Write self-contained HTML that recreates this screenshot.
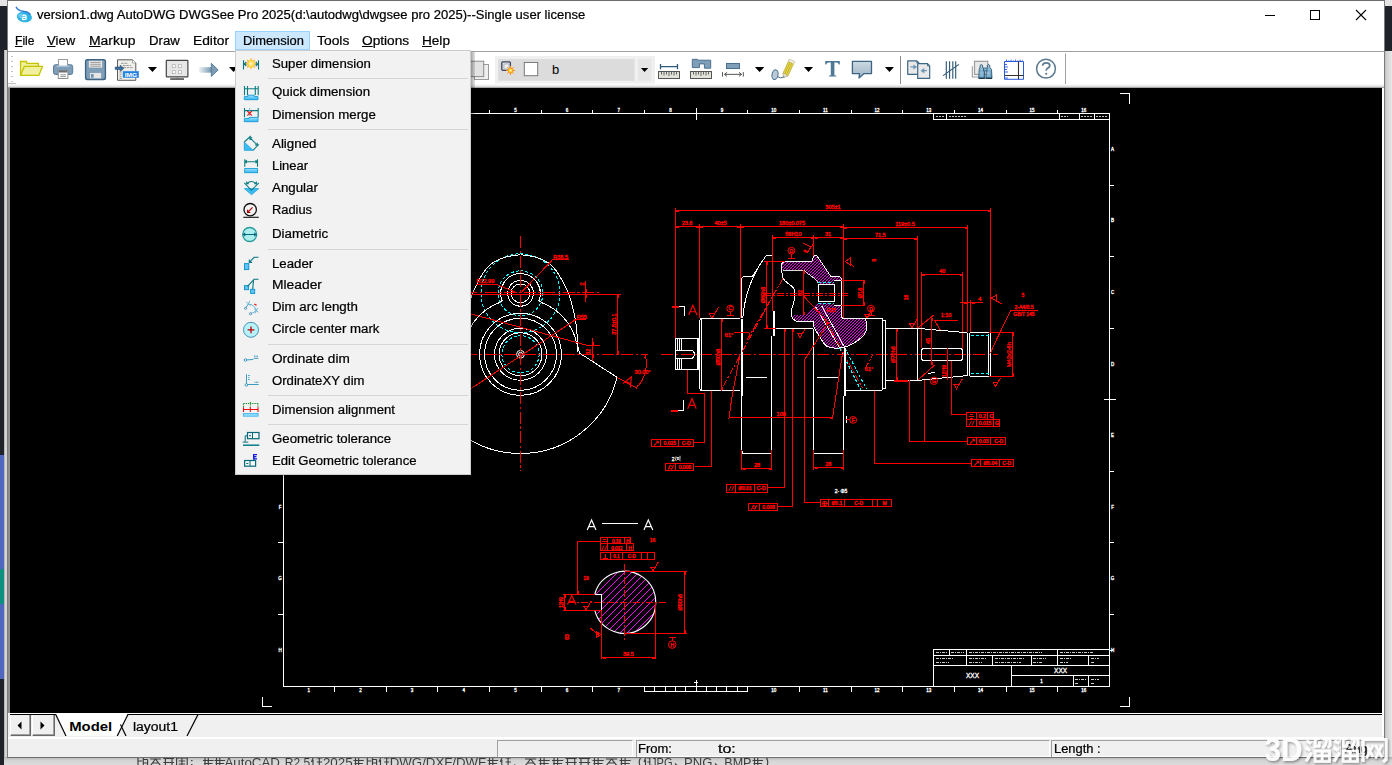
<!DOCTYPE html>
<html><head><meta charset="utf-8"><title>DWGSee</title>
<style>
html,body{margin:0;padding:0;}
body{width:1392px;height:765px;overflow:hidden;position:relative;background:#dcdcdc;font-family:"Liberation Sans",sans-serif;}
div,span,svg{position:absolute;box-sizing:border-box;}
.t{-webkit-text-stroke:.22px currentColor;white-space:pre;transform-origin:0 50%;line-height:1;font-family:"Liberation Sans",sans-serif;}
.t u{text-decoration:underline;text-underline-offset:.6px;text-decoration-thickness:1px;}
svg{left:0;top:0;overflow:hidden;}

</style></head>
<body>
<!-- desktop / background windows visible around the app window -->
<div style="left:0;top:0;width:1392px;height:7px;background:#e4e4e4"></div>
<div style="left:0;top:6px;width:8px;height:674px;background:#20222a"></div>
<div style="left:0;top:455px;width:4px;height:224px;background:#4f68be"></div>
<div style="left:0;top:569px;width:4px;height:35px;background:#0f8f80"></div>
<div style="left:0;top:679px;width:4px;height:86px;background:#20222a"></div>
<div style="left:4px;top:50px;width:4px;height:715px;background:linear-gradient(90deg,#a4a4a4 0,#d6d6d6 35%,#d2d2d2 100%)"></div>
<div style="left:1384px;top:6px;width:8px;height:45px;background:#20222a"></div>
<div style="left:1384px;top:51px;width:8px;height:714px;background:linear-gradient(90deg,#b4b4b4 0,#d2d2d2 35%,#e8e8e8 100%)"></div>
<div style="left:4px;top:757px;width:1388px;height:8px;background:linear-gradient(180deg,#b4b4b4,#d4d4d4 45%,#dcdcdc)"></div>

<!-- app window -->
<div id="win" style="left:7px;top:0;width:1378px;height:758px;background:#fff;border:1px solid #7a7a7a;border-top-color:#6e6e6e"></div>
<!-- menubar bottom line -->
<div style="left:8px;top:51px;width:1376px;height:1px;background:#a0a0a0"></div>
<!-- toolbar bottom shading -->
<div style="left:8px;top:84px;width:1376px;height:4px;background:linear-gradient(180deg,#fff,#e2e2e2 60%,#8c8c8c)"></div>
<!-- toolbar grip -->
<div style="left:11px;top:56px;width:2px;height:28px;background:repeating-linear-gradient(180deg,#c4c4c4 0 1.5px,#fff 1.5px 5px)"></div>
<div style="left:8px;top:83px;width:8px;height:1px;background:#bdbdbd"></div>
<!-- window borders beside canvas -->
<div style="left:8px;top:88px;width:2px;height:626px;background:#8e8e8e"></div>
<div style="left:1382px;top:88px;width:2px;height:648px;background:#fff"></div>
<!-- canvas -->
<div id="canvas" style="left:10px;top:88px;width:1372px;height:625px;background:#000"></div>
<!-- dimension menu highlight -->
<div style="left:235px;top:31px;width:75px;height:19px;background:#cce8ff;border:1px solid #99d1ff"></div>
<!-- window buttons -->
<svg width="1392" height="765" viewBox="0 0 1392 765">
 <path d="M1265 15.5h10" stroke="#000" stroke-width="1" fill="none"/>
 <rect x="1310.5" y="10.5" width="9" height="9" stroke="#000" stroke-width="1" fill="none"/>
 <path d="M1356 10l10 10M1366 10l-10 10" stroke="#000" stroke-width="1.1" fill="none"/>
 <!-- app icon -->
 <g>
  <ellipse cx="24.400" cy="17" rx="7.600" ry="5.300" transform="rotate(8 24.4 17)" fill="#2fb4e6"/>
  <ellipse cx="21.500" cy="15.800" rx="3.200" ry="2.400" fill="#9fe0f6" opacity=".55"/>
  <path d="M16.300 7.400Q18.500 11 23 11.200T30 14" stroke="#2f7fd8" stroke-width="1.500" fill="none" stroke-linecap="round"/>
  <path d="M22.600 15.600c1.500-1 3.500-.6 3.500 1v3M26.100 17.500c-2.300-.4-3.800.2-3.800 1.200 0 1.200 2.400 1.400 3.800-.1" stroke="#fff" stroke-width="1.250" fill="none"/>
 </g>
</svg>

<svg id="toolbar" width="1392" height="765" viewBox="0 0 1392 765">
<defs>
<linearGradient id="garrow" x1="0" x2="1"><stop offset="0" stop-color="#eef3f6"/><stop offset="1" stop-color="#6f93ad"/></linearGradient>
<linearGradient id="gbub" x1="0" y1="0" x2="0" y2="1"><stop offset="0" stop-color="#cddae3"/><stop offset="1" stop-color="#9db4c4"/></linearGradient>
<linearGradient id="gbin" x1="0" y1="0" x2="0" y2="1"><stop offset="0" stop-color="#a9d0e6"/><stop offset="1" stop-color="#4f8db4"/></linearGradient>
</defs>
<!-- folder -->
<path d="M20.5 75.400V61.500H26.400L27 63.400H38.400V66.300" fill="#efef9c" stroke="#c4c400" stroke-width="1.300"/>
<path d="M24.400 66.300H42.600L38.800 75.400H20.500Z" fill="#f0f09e" stroke="#c4c400" stroke-width="1.300" stroke-linejoin="round"/>
<!-- printer -->
<rect x="53.500" y="64.700" width="19.200" height="9.800" rx="2" fill="#7d9db8" stroke="#5b7e9b"/>
<rect x="58.500" y="59.500" width="9" height="7" fill="#fdfeff" stroke="#9a9a9a"/>
<rect x="56.500" y="65.500" width="13" height="1.500" fill="#a8c0d2"/>
<rect x="58.300" y="70.500" width="9.600" height="8" fill="#fff" stroke="#8e8e8e"/>
<rect x="58.800" y="70.500" width="8.600" height="2" fill="#6e6e6e"/>
<path d="M60.300 74.800H66M60.300 76.600H66" stroke="#8a8a8a" stroke-width=".9"/>
<!-- floppy -->
<rect x="85.600" y="59.800" width="19.800" height="19.700" rx="1.800" fill="#7f9fb8" stroke="#3d6484" stroke-width="1.400"/>
<rect x="88.400" y="60.600" width="14.200" height="7.400" fill="#e9e9e9" stroke="#6f8da6" stroke-width=".6"/>
<path d="M90.300 62.400H100.800M90.300 64.300H100.800M90.300 66.200H100.800" stroke="#8a8a8a" stroke-width=".8"/>
<rect x="89.800" y="72.700" width="11.600" height="6" fill="#e6e6e6" stroke="#6f8da6" stroke-width=".5"/>
<rect x="91" y="74" width="2.600" height="3.800" fill="#6f93b0"/>
<!-- IMG doc -->
<path d="M117.500 59.800H132.500L135.800 63V80.300H117.500Z" fill="#f1efe9" stroke="#5a5a5a" stroke-width="1"/>
<path d="M132.500 59.800V63H135.800" fill="#fff" stroke="#8a8a8a" stroke-width=".7"/>
<path d="M121 63.300H128M123 65.500H131M123.500 67.600H133M121 69.800H123M119.500 72H121.500M119.500 74.200H121.500M119.500 76.400H121.500M119.500 78.400H122" stroke="#8d8d8d" stroke-width=".9" stroke-dasharray="2.500 .8"/>
<path d="M115.200 67h5v-1.800l3.800 3l-3.800 3v-1.800h-5z" fill="#3b6e9c" stroke="#274f74" stroke-width=".6"/>
<rect x="123" y="71.200" width="15.800" height="6.500" fill="#1f7fdc" stroke="#4c9ae8" stroke-width=".5"/>
<text x="130.900" y="76.700" font-family="Liberation Sans" font-weight="700" font-size="6.200" fill="#fff" text-anchor="middle" textLength="12.500" lengthAdjust="spacingAndGlyphs">IMG</text>
<path d="M147.900 67.100h9.100l-4.550 4.900z" fill="#000"/>
<!-- monitor -->
<rect x="166.300" y="60.400" width="21.600" height="16.500" rx=".6" fill="#e7e7e7" stroke="#444" stroke-width="1.200"/>
<g fill="#fbfbfb" stroke="#b6b6b6" stroke-width=".8"><rect x="172.300" y="64.600" width="3" height="3"/><rect x="178.500" y="64.600" width="3" height="3"/><rect x="172.300" y="70.600" width="3" height="3"/><rect x="178.500" y="70.600" width="3" height="3"/></g>
<rect x="175.500" y="77" width="3.500" height="1.400" fill="#9a9a9a"/>
<rect x="170.200" y="78.300" width="13.800" height="1.500" fill="#444"/>
<!-- arrow -->
<rect x="199" y="67.200" width="13" height="5.500" fill="url(#garrow)"/>
<path d="M211.300 63.300L218.100 69.900L211.300 76.500Z" fill="#7d9db5" stroke="#4f7896" stroke-width=".9" stroke-linejoin="round"/>
<path d="M229 67.100h9.100l-4.550 4.900z" fill="#000"/>
<!-- partial copy icon next to menu -->
<rect x="474.500" y="64.500" width="14" height="15" fill="#efefef" stroke="#9a9a9a"/>
<rect x="468.500" y="61.200" width="15.200" height="15.400" fill="#e3e3e3" stroke="#8c8c8c"/>
<!-- layer combo -->
<rect x="495" y="56" width="160" height="27.600" fill="#f0f0f0"/>
<rect x="498.200" y="59" width="136.400" height="21.800" fill="#dcdcdc"/>
<rect x="638" y="59" width="13.200" height="21.800" fill="#e6e6e6"/>
<path d="M640.900 67.900h7.300l-3.650 4.200z" fill="#000"/>
<rect x="501.800" y="61.900" width="8.600" height="8.400" rx="1" fill="#e4e6ea" stroke="#39435a" stroke-width="1.300"/>
<rect x="504" y="64" width="5" height="5" fill="#f4f4f6" stroke="#8a90a0" stroke-width=".6"/>
<g stroke="#ff8c1a" stroke-width="1"><path d="M510.500 65.800v9.200M505.900 70.400h9.200M507.300 67.200l6.400 6.400M513.700 67.200l-6.400 6.400"/></g>
<circle cx="510.500" cy="70.400" r="2.900" fill="#ffa01e"/><circle cx="510.500" cy="70.400" r="1.600" fill="#ffe24a"/><circle cx="510.500" cy="70.400" r=".7" fill="#fff8c8"/>
<rect x="524.300" y="62.500" width="13.400" height="13.200" fill="#fff" stroke="#7a7a7a" stroke-width="1"/>
<!-- ruler 1 -->
<path d="M660.200 66.600H677.800M660.500 64V69.200M677.500 64V69.200" stroke="#2f5a7a" stroke-width="1.300" fill="none"/>
<rect x="658.500" y="71.500" width="21" height="7" fill="#e1e3db" stroke="#555" stroke-width="1"/>
<path d="M661.500 72V74.500M664 72V75.500M666.500 72V74.500M669 72V76M671.500 72V74.500M674 72V75.500M676.500 72V74.500" stroke="#555" stroke-width=".9"/>
<!-- ruler 2 -->
<path d="M692.300 59.300H697.400V60.200H710.700V68.200H704.400V63.900H699.400V67.600H692.300Z" fill="#7f9fb8" stroke="#4a7090" stroke-width="1"/>
<rect x="690.500" y="71.500" width="21" height="7" fill="#e1e3db" stroke="#555" stroke-width="1"/>
<path d="M693.500 72V74.500M696 72V75.500M698.500 72V74.500M701 72V76M703.500 72V74.500M706 72V75.500M708.500 72V74.500" stroke="#555" stroke-width=".9"/>
<!-- measure 3 -->
<rect x="726.500" y="63.500" width="13" height="5" fill="#7f9fb8" stroke="#4a7090" stroke-width="1"/>
<path d="M722.500 72.100V76.600M743.300 72.100V76.600M724.500 74.350H741.500M727 72.300L724.500 74.350L727 76.400M739 72.300L741.500 74.350L739 76.400" stroke="#555" stroke-width="1" fill="none"/>
<path d="M754.900 67.100h9.400l-4.700 4.800z" fill="#000"/>
<!-- pencil -->
<ellipse cx="775" cy="74.700" rx="3" ry="4.900" fill="#b9c9d5" stroke="#4a7090" stroke-width="1" transform="rotate(12 775 74.700)"/>
<path d="M777.500 76.500Q780 79 783.600 77.100" stroke="#4a7090" stroke-width="1" fill="none"/>
<path d="M789.200 59.400L794.600 61.600L788 76L783.500 77.400L783 73.200Z" fill="#e6d545" stroke="#a89a28" stroke-width=".6"/>
<path d="M791 60.200L784.600 74M792.800 60.900L786.500 74.800" stroke="#b8a82e" stroke-width=".8"/>
<path d="M789.200 59.400L794.600 61.600L793.800 63.400L788.400 61.200Z" fill="#f4f4f4" stroke="#bbb" stroke-width=".4"/>
<path d="M783 73.200L788 76L783.500 77.400Z" fill="#e9e9e9" stroke="#999" stroke-width=".4"/>
<path d="M783.300 76L784.800 76.900L783.500 77.400Z" fill="#555"/>
<path d="M804 67.100h9.100l-4.550 4.800z" fill="#000"/>
<!-- T -->
<path d="M825.200 61H839.800V64.600H838.800Q838.300 62.600 836.500 62.600H834.400V75.300L836.400 75.800V76.600H828.800V75.800L830.800 75.300V62.600H828.600Q826.700 62.600 826.200 64.600H825.200Z" fill="#4f7896"/>
<!-- speech bubble -->
<path d="M852.400 61.400H871.500V73.600H864.100L859 77.900L859.500 73.600H852.400Z" fill="url(#gbub)" stroke="#3d6484" stroke-width="1.300" stroke-linejoin="round"/>
<path d="M884.900 67.100h9.100l-4.550 4.800z" fill="#000"/>
<path d="M900.500 56V84" stroke="#8c8c8c" stroke-width="1"/>
<!-- compare docs -->
<path d="M907.700 60.800H916.800L919 63V74.300H907.700Z" fill="#e9e9e9" stroke="#3d6888" stroke-width="1.200" stroke-linejoin="round"/>
<path d="M916.800 60.800V63H919" fill="none" stroke="#3d6888" stroke-width=".9"/>
<path d="M917.700 63.700H927.500L929.700 65.900V78.400H917.700Z" fill="#e9e9e9" stroke="#3d6888" stroke-width="1.200" stroke-linejoin="round"/>
<path d="M927.500 63.700V65.900H929.700" fill="none" stroke="#3d6888" stroke-width=".9"/>
<path d="M910.400 66.300h3v-1.900l3.800 2.500l-3.800 2.500v-1.900h-3z" fill="#6f97b5"/>
<path d="M926.900 70.100h-2.600v-2.100l-3.800 2.700l3.800 2.700v-2.100h2.600z" fill="#6f97b5"/>
<!-- hatch lines -->
<path d="M946.300 61.200V78.800M949.600 61.200V78.800M952.800 61.200V78.800M955.700 61.200V78.800M943.100 75.600L958.900 64.400" stroke="#2f5a78" stroke-width="1.150" fill="none"/>
<!-- binoculars -->
<path d="M972.300 66.200V77H978.500" fill="none" stroke="#9a9a9a" stroke-width="1.100"/>
<rect x="974.500" y="61.300" width="13.300" height="13.200" fill="#e9e9e9" stroke="#9c9c9c" stroke-width="1.200"/>
<path d="M980.100 67.300V65.400Q981.350 63.600 982.600 65.400V67.300L984.300 69.500L984.800 78.400H978.700L979.200 69.500Z" fill="url(#gbin)" stroke="#1f4560" stroke-width=".8" stroke-linejoin="round"/>
<path d="M987.300 67.300V65.400Q988.550 63.600 989.800 65.400V67.300L991.500 69.500L992 78.400H985.800L986.300 69.500Z" fill="url(#gbin)" stroke="#1f4560" stroke-width=".8" stroke-linejoin="round"/>
<rect x="983.600" y="68" width="3.400" height="2.900" fill="#7fb2d0" stroke="#1f4560" stroke-width=".6"/>
<path d="M978.700 78.200H984.800M985.800 78.200H992" stroke="#10283a" stroke-width="1.100"/>
<path d="M980 72V77M981.300 72V77M982.600 72V77M987.300 72V77M988.600 72V77M989.900 72V77" stroke="#cfe6f4" stroke-width=".5" opacity=".8"/>
<!-- blue ruler frame -->
<path d="M1004.500 61.500H1023.500V79.300H1004.500Z" fill="#fff" stroke="#2a5adc" stroke-width="1"/>
<path d="M1006.500 59.600V61.500M1008.800 60.300V61.500M1011 59.600V61.500M1013.300 60.300V61.500M1015.600 59.600V61.500M1017.900 60.300V61.500M1020.200 59.600V61.500M1022.300 60.300V61.500M1004.500 64.500H1007M1004.500 67H1008M1004.500 69.500H1007M1004.500 72H1008M1004.500 78H1008" stroke="#2a5adc" stroke-width=".9"/>
<path d="M1018.500 61.500V79.300M1005 75.500H1023.500" stroke="#333" stroke-width="1.100"/>
<!-- help -->
<circle cx="1046" cy="68.700" r="9.400" fill="#fff" stroke="#5b7a90" stroke-width="1.500"/>
<path d="M1042.400 65.600Q1043 62.800 1046.300 62.800Q1049.800 62.800 1049.800 65.500Q1049.800 67.200 1047.800 68.100Q1046.200 68.900 1046.200 70.800" stroke="#5b7a90" stroke-width="1.700" fill="none"/>
<circle cx="1046.200" cy="73.800" r="1.100" fill="#5b7a90"/>
<path d="M1065.500 53.500V84" stroke="#a0a0a0" stroke-width="1"/>
</svg>

<svg id="drawing" width="1392" height="765" viewBox="0 0 1392 765">
<defs>
<style>
.w{stroke:#fff;stroke-width:1;fill:none}
.w2{stroke:#fff;stroke-width:2;fill:none}
.r{stroke:#f00;stroke-width:1;fill:none}
.r2{stroke:#f00;stroke-width:2;fill:none}
.rd{stroke:#f00;stroke-width:1;fill:none;stroke-dasharray:12 2.5 2.5 2.5}
.rd2{stroke:#f00;stroke-width:1;fill:none;stroke-dasharray:7 2 2 2}
.cy{stroke:#0ff;stroke-width:1;fill:none;stroke-dasharray:3 2}
.rf{fill:#f00;stroke:none}
.wf{fill:#fff;stroke:none}
.c{shape-rendering:crispEdges}
text{shape-rendering:auto}
.rt{stroke:#f00;stroke-width:.4;fill:#f00;font-family:"Liberation Sans",sans-serif}
.wt{stroke:#fff;stroke-width:.3;fill:#fff;font-family:"Liberation Sans",sans-serif}
</style>
<pattern id="hat" width="3" height="3" patternUnits="userSpaceOnUse"><rect width="3" height="3" fill="#000"/><g fill="#f0f" shape-rendering="crispEdges"><rect x="0" y="2" width="1" height="1"/><rect x="1" y="1" width="1" height="1"/><rect x="2" y="0" width="1" height="1"/></g></pattern>
<pattern id="hat2" width="7" height="7" patternUnits="userSpaceOnUse"><rect width="7" height="7" fill="#000"/><g fill="#f0f" shape-rendering="crispEdges"><rect x="0" y="6" width="1" height="1"/><rect x="1" y="5" width="1" height="1"/><rect x="2" y="4" width="1" height="1"/><rect x="3" y="3" width="1" height="1"/><rect x="4" y="2" width="1" height="1"/><rect x="5" y="1" width="1" height="1"/><rect x="6" y="0" width="1" height="1"/></g></pattern>
<clipPath id="cv"><rect x="10" y="88" width="1372" height="625"/></clipPath>
</defs>
<g clip-path="url(#cv)" shape-rendering="crispEdges">
<path class="w c" d="M283 113.5H1109.5" />
<path class="w c" d="M283 686.5H1110" />
<path class="w c" d="M283.5 113.5V686" />
<path class="w c" d="M1109.5 113.5V686" />
<path class="w c" d="M334.5 110V113.5" />
<path class="w c" d="M334.5 686V691.6" />
<path class="w c" d="M386.5 110V113.5" />
<path class="w c" d="M386.5 686V691.6" />
<path class="w c" d="M437.5 110V113.5" />
<path class="w c" d="M437.5 686V691.6" />
<path class="w c" d="M489.5 110V113.5" />
<path class="w c" d="M489.5 686V691.6" />
<path class="w c" d="M541.5 110V113.5" />
<path class="w c" d="M541.5 686V691.6" />
<path class="w c" d="M592.5 110V113.5" />
<path class="w c" d="M592.5 686V691.6" />
<path class="w c" d="M644.5 110V113.5" />
<path class="w c" d="M644.5 686V691.6" />
<path class="w c" d="M696.5 108V119.5" />
<path class="w c" d="M696.5 680V692" />
<path class="w c" d="M747.5 110V113.5" />
<path class="w c" d="M747.5 686V691.6" />
<path class="w c" d="M799.5 110V113.5" />
<path class="w c" d="M799.5 686V691.6" />
<path class="w c" d="M851.5 110V113.5" />
<path class="w c" d="M851.5 686V691.6" />
<path class="w c" d="M902.5 110V113.5" />
<path class="w c" d="M902.5 686V691.6" />
<path class="w c" d="M954.5 110V113.5" />
<path class="w c" d="M954.5 686V691.6" />
<path class="w c" d="M1006.5 110V113.5" />
<path class="w c" d="M1006.5 686V691.6" />
<path class="w c" d="M1057.5 110V113.5" />
<path class="w c" d="M1057.5 686V691.6" />
<text class="wt" x="308.8" y="112.2" font-size="4.5" text-anchor="middle" >1</text>
<text class="wt" x="308.8" y="691.6" font-size="4.5" text-anchor="middle" >1</text>
<text class="wt" x="360.5" y="112.2" font-size="4.5" text-anchor="middle" >2</text>
<text class="wt" x="360.5" y="691.6" font-size="4.5" text-anchor="middle" >2</text>
<text class="wt" x="412.1" y="112.2" font-size="4.5" text-anchor="middle" >3</text>
<text class="wt" x="412.1" y="691.6" font-size="4.5" text-anchor="middle" >3</text>
<text class="wt" x="463.8" y="112.2" font-size="4.5" text-anchor="middle" >4</text>
<text class="wt" x="463.8" y="691.6" font-size="4.5" text-anchor="middle" >4</text>
<text class="wt" x="515.5" y="112.2" font-size="4.5" text-anchor="middle" >5</text>
<text class="wt" x="515.5" y="691.6" font-size="4.5" text-anchor="middle" >5</text>
<text class="wt" x="567.1" y="112.2" font-size="4.5" text-anchor="middle" >6</text>
<text class="wt" x="567.1" y="691.6" font-size="4.5" text-anchor="middle" >6</text>
<text class="wt" x="618.8" y="112.2" font-size="4.5" text-anchor="middle" >7</text>
<text class="wt" x="618.8" y="691.6" font-size="4.5" text-anchor="middle" >7</text>
<text class="wt" x="670.4" y="112.2" font-size="4.5" text-anchor="middle" >8</text>
<text class="wt" x="722.1" y="112.2" font-size="4.5" text-anchor="middle" >9</text>
<text class="wt" x="773.7" y="112.2" font-size="4.5" text-anchor="middle" >10</text>
<text class="wt" x="773.7" y="691.6" font-size="4.5" text-anchor="middle" >10</text>
<text class="wt" x="825.4" y="112.2" font-size="4.5" text-anchor="middle" >11</text>
<text class="wt" x="825.4" y="691.6" font-size="4.5" text-anchor="middle" >11</text>
<text class="wt" x="877" y="112.2" font-size="4.5" text-anchor="middle" >12</text>
<text class="wt" x="877" y="691.6" font-size="4.5" text-anchor="middle" >12</text>
<text class="wt" x="928.7" y="112.2" font-size="4.5" text-anchor="middle" >13</text>
<text class="wt" x="928.7" y="691.6" font-size="4.5" text-anchor="middle" >13</text>
<text class="wt" x="980.4" y="112.2" font-size="4.5" text-anchor="middle" >14</text>
<text class="wt" x="980.4" y="691.6" font-size="4.5" text-anchor="middle" >14</text>
<text class="wt" x="1032" y="112.2" font-size="4.5" text-anchor="middle" >15</text>
<text class="wt" x="1032" y="691.6" font-size="4.5" text-anchor="middle" >15</text>
<text class="wt" x="1083.7" y="112.2" font-size="4.5" text-anchor="middle" >16</text>
<text class="wt" x="1083.7" y="691.6" font-size="4.5" text-anchor="middle" >16</text>
<path class="w c" d="M277.5 185.5H283" />
<path class="w c" d="M1109.5 185.5H1114" />
<path class="w c" d="M277.5 256.5H283" />
<path class="w c" d="M1109.5 256.5H1114" />
<path class="w c" d="M277.5 328.5H283" />
<path class="w c" d="M1109.5 328.5H1114" />
<path class="w c" d="M271 399.5H289" />
<path class="w c" d="M1104 399.5H1116" />
<path class="w c" d="M277.5 471.5H283" />
<path class="w c" d="M1109.5 471.5H1114" />
<path class="w c" d="M277.5 542.5H283" />
<path class="w c" d="M1109.5 542.5H1114" />
<path class="w c" d="M277.5 614.5H283" />
<path class="w c" d="M1109.5 614.5H1114" />
<text class="wt" x="280" y="150.9" font-size="4.5" text-anchor="middle" >A</text>
<text class="wt" x="1112.5" y="150.9" font-size="4.5" text-anchor="middle" >A</text>
<text class="wt" x="280" y="222.4" font-size="4.5" text-anchor="middle" >B</text>
<text class="wt" x="1112.5" y="222.4" font-size="4.5" text-anchor="middle" >B</text>
<text class="wt" x="280" y="294" font-size="4.5" text-anchor="middle" >C</text>
<text class="wt" x="1112.5" y="294" font-size="4.5" text-anchor="middle" >C</text>
<text class="wt" x="280" y="365.6" font-size="4.5" text-anchor="middle" >D</text>
<text class="wt" x="1112.5" y="365.6" font-size="4.5" text-anchor="middle" >D</text>
<text class="wt" x="280" y="437.1" font-size="4.5" text-anchor="middle" >E</text>
<text class="wt" x="1112.5" y="437.1" font-size="4.5" text-anchor="middle" >E</text>
<text class="wt" x="280" y="508.7" font-size="4.5" text-anchor="middle" >F</text>
<text class="wt" x="1112.5" y="508.7" font-size="4.5" text-anchor="middle" >F</text>
<text class="wt" x="280" y="580.3" font-size="4.5" text-anchor="middle" >G</text>
<text class="wt" x="1112.5" y="580.3" font-size="4.5" text-anchor="middle" >G</text>
<text class="wt" x="280" y="651.8" font-size="4.5" text-anchor="middle" >H</text>
<text class="wt" x="1112.5" y="651.8" font-size="4.5" text-anchor="middle" >H</text>
<path class="w" d="M1120 93.5 L1129.5 93.5 L1129.5 104" />
<path class="w" d="M1120.4 706.5 L1129.5 706.5 L1129.5 697" />
<path class="w" d="M262.5 697 L262.5 706.5 L272 706.5" />
<rect class="w c" x="644.5" y="686.5" width="103" height="5"/>
<path class="w c" d="M654.5 686V691.5" />
<path class="w c" d="M665.5 686V691.5" />
<path class="w c" d="M675.5 686V691.5" />
<path class="w c" d="M685.5 686V691.5" />
<path class="w c" d="M696.5 686V691.5" />
<path class="w c" d="M706.5 686V691.5" />
<path class="w c" d="M716.5 686V691.5" />
<path class="w c" d="M726.5 686V691.5" />
<path class="w c" d="M737.5 686V691.5" />
<path class="w" d="M694 682.5h4M696 680v6" />
<rect class="w c" x="933.5" y="113.5" width="176" height="6"/>
<path class="w c" d="M946.5 113.5V119.5" />
<path class="w c" d="M1059.5 113.5V119.5" />
<path class="w c" d="M1079.5 113.5V119.5" />
<path class="w c" d="M1094.5 113.5V119.5" />
<path class="w c" d="M936 116.5H945" stroke-dasharray="2 1" opacity=".75"/>
<path class="w c" d="M948.5 116.5H966" stroke-dasharray="2 1" opacity=".75"/>
<path class="w c" d="M1061 116.5H1068" stroke-dasharray="2 1" opacity=".75"/>
<path class="w c" d="M1081 116.5H1093" stroke-dasharray="2 1" opacity=".75"/>
<path class="w c" d="M1095.5 116.5H1108" stroke-dasharray="2 1" opacity=".75"/>
<rect class="w c" x="933.5" y="649.5" width="176" height="37"/>
<path class="w c" d="M933.5 655.5H1109.5" />
<path class="w c" d="M933.5 665.5H1109.5" />
<path class="w c" d="M1011.4 675.5H1109.5" />
<path class="w c" d="M949.5 649.5V655.5" />
<path class="w c" d="M966.5 649.5V665.5" />
<path class="w c" d="M1057.5 649.5V665.5" />
<path class="w c" d="M992.5 655.5V665.5" />
<path class="w c" d="M1031.5 655.5V665.5" />
<path class="w c" d="M1088.5 655.5V665.5" />
<path class="w c" d="M1011.5 665.5V686" />
<path class="w c" d="M1073.5 675.5V686" />
<path class="w c" d="M1088.5 675.5V686" />
<text class="wt" x="972.5" y="678.3" font-size="6.5" text-anchor="middle" >XXX</text>
<text class="wt" x="1060.6" y="673" font-size="6.5" text-anchor="middle" >XXX</text>
<path class="w c" d="M936 652.5H947" stroke-dasharray="2.5 1 1.5 1" opacity="0.8"/>
<path class="w c" d="M951 652.5H964" stroke-dasharray="2.5 1 1.5 1" opacity="0.8"/>
<path class="w c" d="M969 652.5H1042" stroke-dasharray="2.5 1 1.5 1" opacity="0.8"/>
<path class="w c" d="M1060 652.5H1094" stroke-dasharray="2.5 1 1.5 1" opacity="0.8"/>
<path class="w c" d="M936 658.5H953" stroke-dasharray="2.5 1 1.5 1" opacity="0.8"/>
<path class="w c" d="M936 662.5H949" stroke-dasharray="2.5 1 1.5 1" opacity="0.8"/>
<path class="w c" d="M969 658.5H986" stroke-dasharray="2.5 1 1.5 1" opacity="0.8"/>
<path class="w c" d="M969 662.5H982" stroke-dasharray="2.5 1 1.5 1" opacity="0.8"/>
<path class="w c" d="M995 658.5H1025" stroke-dasharray="2.5 1 1.5 1" opacity="0.8"/>
<path class="w c" d="M995 662.5H1021" stroke-dasharray="2.5 1 1.5 1" opacity="0.8"/>
<path class="w c" d="M1033 658.5H1046" stroke-dasharray="2.5 1 1.5 1" opacity="0.8"/>
<path class="w c" d="M1033 662.5H1042" stroke-dasharray="2.5 1 1.5 1" opacity="0.8"/>
<path class="w c" d="M1060 658.5H1072" stroke-dasharray="2.5 1 1.5 1" opacity="0.8"/>
<path class="w c" d="M1060 662.5H1068" stroke-dasharray="2.5 1 1.5 1" opacity="0.8"/>
<path class="w c" d="M1091 658.5H1099" stroke-dasharray="2.5 1 1.5 1" opacity="0.8"/>
<path class="w c" d="M1091 662.5H1095" stroke-dasharray="2.5 1 1.5 1" opacity="0.8"/>
<path class="w c" d="M1075 679.5H1086" stroke-dasharray="2.5 1 1.5 1" opacity="0.8"/>
<path class="w c" d="M1075 683.5H1079" stroke-dasharray="2.5 1 1.5 1" opacity="0.8"/>
<path class="w c" d="M1091 679.5H1099" stroke-dasharray="2.5 1 1.5 1" opacity="0.8"/>
<path class="w c" d="M1091 683.5H1095" stroke-dasharray="2.5 1 1.5 1" opacity="0.8"/>
<text class="wt" x="1041.5" y="682.8" font-size="4.5" text-anchor="middle" >1</text>
<path class="w c" d="M1109.5 650.5H1113" />
<circle class="w" cx="520.5" cy="293.3" r="9.4" />
<circle class="w" cx="520.5" cy="293.3" r="12.9" />
<circle class="cy" cx="520.5" cy="293.3" r="22.4" />
<circle class="cy" cx="520.5" cy="293.3" r="39.5" stroke-dasharray="4 2.5"/>
<path class="w" d="M502.1 300.7A19.8 19.8 0 1 1 538.9 300.7" />
<path class="w" d="M538.9 300.7 L541.9 302.7 A56.5 56.5 0 0 1 578 352" />
<path class="w" d="M502.1 300.7 L499.1 302.7 A56.5 56.5 0 0 0 463 352" />
<circle class="w" cx="520.5" cy="354.3" r="41" />
<circle class="w" cx="520.5" cy="354.3" r="36" />
<circle class="w" cx="520.5" cy="354.3" r="26" />
<circle class="w" cx="520.5" cy="354.3" r="21.5" />
<circle class="cy" cx="520.5" cy="354.3" r="18.6" />
<circle class="w" cx="520.5" cy="354.3" r="3.9"  shape-rendering="auto"/>
<circle class="w" cx="520.5" cy="354.3" r="2"  shape-rendering="auto"/>
<path class="w" d="M520.5 254.7C523.1 255.1 531.2 255.8 535.9 257.2C540.5 258.6 545 260.7 548.4 263C551.8 265.3 553.9 267.9 556.3 270.9C558.6 273.9 560.5 277.6 562.5 281.1C564.5 284.6 566.4 288.1 568 292C569.6 295.9 570.9 300.4 572 304.6C573.1 308.8 574 313 574.8 317.2C575.6 321.4 576.2 324.7 576.7 329.7C577.2 334.7 577.4 343.1 577.9 347C578.4 350.9 579.5 352.2 579.8 353.2L617 377.3" />
<path class="w" d="M520.5 254.7C517.9 255.1 509.8 255.8 505.1 257.2C500.5 258.6 496 260.7 492.6 263C489.2 265.3 487.1 267.9 484.7 270.9C482.4 273.9 480.4 277.6 478.5 281.1C476.6 284.6 474.6 288.1 473 292C471.4 295.9 470.1 300.4 469 304.6C467.9 308.8 467 313 466.2 317.2C465.4 321.4 464.8 324.7 464.3 329.7C463.8 334.7 463.6 343.1 463.1 347C462.6 350.9 461.5 352.2 461.2 353.2" />
<path class="w" d="M617 377.3A99.2 99.2 0 0 1 424 377.3" />
<path class="rd c" d="M520.5 236V471" />
<path class="rd c" d="M465 292.5H601" />
<path class="r c" d="M465 294.5H620.5" />
<path class="rd c" d="M465 354.5H647.7" />
<path class="r" d="M520.5 293.3 L552.4 259.9" />
<path class="r c" d="M552.4 259.5H568.5" />
<text class="rt" x="553.3" y="258.7" font-size="5.5" text-anchor="start" >R38.5</text>
<path class="r c" d="M476 284.5H496" />
<path class="r" d="M496 284.2 L517 292.8" />
<text class="rt" x="476.5" y="282.8" font-size="5.5" text-anchor="start" >R12.99</text>
<path class="rf" d="M517 292.8l-5.5-1.2l.7-1.700z" />
<path class="r" d="M575.4 319.8 L465 392.5" />
<path class="r c" d="M575.4 319.5H586" />
<text class="rt" x="576.8" y="318.6" font-size="5.5" text-anchor="start" >R55</text>
<path class="rf" d="M571.5 322.4l3.500-3.400l1 1.500z" />
<path class="r" d="M465 312.3 L587.6 345.4" />
<path class="r c" d="M585.5 281.4V301.5" />
<rect class="rf c" x="586.3" y="288.5" width="1" height="3"/>
<rect class="rf c" x="586.3" y="295.3" width="1" height="3"/>
<text class="rt" x="583.8" y="284" font-size="5.5" text-anchor="middle" transform="rotate(-90 583.8 284)" >2</text>
<path class="r c" d="M617.5 294.4V354.4" />
<rect class="rf c" x="617.5" y="294.9" width="1" height="3"/>
<rect class="rf c" x="617.5" y="350.9" width="1" height="3"/>
<text class="rt" x="615.5" y="324" font-size="5.5" text-anchor="middle" transform="rotate(-90 615.5 324)" >37.5±0.1</text>
<path class="r c" d="M592.5 338.4V361" />
<path class="r c" d="M587.6 345.5H599.6" />
<rect class="rf c" x="592.5" y="341.9" width="1" height="3"/>
<rect class="rf c" x="592.5" y="354.9" width="1" height="3"/>
<text class="rt" x="590.3" y="351.5" font-size="5" text-anchor="middle" transform="rotate(-90 590.3 351.5)" >12</text>
<path class="r" d="M617 377.3 L637.3 388.4" />
<path class="r" d="M645 354.4A34 34 0 0 1 636.5 387.8" />
<path class="rf" d="M645.2 354.4l-.9 3.600l1.800 0z" />
<path class="rf" d="M636.6 387.8l2.700-2.400l-1.500-1z" />
<text class="rt" x="642.6" y="374" font-size="5.5" text-anchor="middle" >30.00°</text>
<path class="r" transform="rotate(28 629 381.2)" shape-rendering="auto" style="stroke-width:1.15" d="M624.8 386.2L629 376.2L633.2 386.2M626.2 382.8H631.8"/>
<path class="r c" d="M675.5 208V340.5" />
<path class="r c" d="M990.5 208V352" />
<path class="r c" d="M675.3 210.5H990.7" />
<rect class="rf c" x="676.3" y="210.5" width="3" height="1"/>
<rect class="rf c" x="987.7" y="210.5" width="3" height="1"/>
<text class="rt" x="833" y="209.2" font-size="5.5" text-anchor="middle" >305±1</text>
<path class="r c" d="M699.5 224V318" />
<path class="r c" d="M740.5 224V318" />
<path class="r c" d="M843.5 224V318" />
<path class="r c" d="M967.5 224.5V332" />
<path class="r c" d="M675.3 226.5H699.4" />
<rect class="rf c" x="676.3" y="226.5" width="3" height="1"/>
<rect class="rf c" x="696.4" y="226.5" width="3" height="1"/>
<text class="rt" x="687" y="225.2" font-size="5.5" text-anchor="middle" >23.6</text>
<path class="r c" d="M699.4 226.5H740.4" />
<rect class="rf c" x="700.4" y="226.5" width="3" height="1"/>
<rect class="rf c" x="737.4" y="226.5" width="3" height="1"/>
<text class="rt" x="720.5" y="225.2" font-size="5.5" text-anchor="middle" >40±5</text>
<path class="r c" d="M740.4 226.5H843.4" />
<rect class="rf c" x="741.4" y="226.5" width="3" height="1"/>
<rect class="rf c" x="840.4" y="226.5" width="3" height="1"/>
<text class="rt" x="792" y="225.2" font-size="5.5" text-anchor="middle" >180±0.075</text>
<path class="r c" d="M843.4 227.5H967.6" />
<rect class="rf c" x="844.4" y="227.5" width="3" height="1"/>
<rect class="rf c" x="964.6" y="227.5" width="3" height="1"/>
<text class="rt" x="905" y="226.2" font-size="5.5" text-anchor="middle" >119±0.5</text>
<path class="r c" d="M772.5 235V255.5" />
<path class="r c" d="M813.5 235V256" />
<path class="r c" d="M917.5 235.5V328" />
<path class="r c" d="M772.4 237.5H813.6" />
<rect class="rf c" x="773.4" y="237.5" width="3" height="1"/>
<rect class="rf c" x="810.6" y="237.5" width="3" height="1"/>
<text class="rt" x="793.4" y="236.2" font-size="5.5" text-anchor="middle" >58H10</text>
<path class="r c" d="M813.6 237.5H843.4" />
<rect class="rf c" x="814.6" y="237.5" width="3" height="1"/>
<rect class="rf c" x="840.4" y="237.5" width="3" height="1"/>
<text class="rt" x="828" y="236.2" font-size="5.5" text-anchor="middle" >31</text>
<path class="r c" d="M843.4 238.5H917.4" />
<rect class="rf c" x="844.4" y="238.5" width="3" height="1"/>
<rect class="rf c" x="914.4" y="238.5" width="3" height="1"/>
<text class="rt" x="880.3" y="237.2" font-size="5.5" text-anchor="middle" >71.5</text>
<path class="r c" d="M921.5 272V348" />
<path class="r c" d="M962.5 272V354.4" />
<path class="r c" d="M921.4 274.5H962.6" />
<rect class="rf c" x="922.4" y="274.5" width="3" height="1"/>
<rect class="rf c" x="959.6" y="274.5" width="3" height="1"/>
<text class="rt" x="942.3" y="273.2" font-size="5.5" text-anchor="middle" >40</text>
<path class="r c" d="M960 302.5H983" />
<path class="r c" d="M970.5 300V332.4" />
<text class="rt" x="979.8" y="301" font-size="5.5" text-anchor="middle" >4</text>
<rect class="rf c" x="964.1" y="302.5" width="3" height="1"/>
<rect class="rf c" x="971.8" y="302.5" width="3" height="1"/>
<path class="rd c" d="M661.4 354.5H997.6" />
<path class="w" d="M676.3 338.5H698.5V369.5H676.3Q675 369.5 675 368V340Q675 338.5 676.3 338.5" />
<path class="w c" d="M677.5 338.5V350" />
<path class="w c" d="M677.5 358.6V369.5" />
<path class="w c" d="M679.5 338.5V350" />
<path class="w c" d="M679.5 358.6V369.5" />
<path class="w c" d="M681.5 338.5V350" />
<path class="w c" d="M681.5 358.6V369.5" />
<path class="w c" d="M697.5 338.5V369.5" />
<path class="w" d="M675 350H690Q694.3 350 694.3 354.3T690 358.600H675" />
<path class="w" d="M702 318.5H739.5M702 390.5H739.5M700 320.5Q700 318.5 702 318.5M700 388.5Q700 390.5 702 390.5" />
<path class="w c" d="M699.5 320.5V388.5" />
<path class="w c" d="M701.5 319V390" />
<path class="w2 c" d="M741.5 318.5V396" />
<path class="w c" d="M741.5 396V451" />
<path class="w" d="M741.8 318.4V278.500L743.4 276.500H752.3L766 255.700H772.400" />
<path class="w" d="M764.5 258C763.7 259.2 761.4 262.3 759.8 265C758.2 267.7 756.7 269.9 754.8 274C752.9 278.1 750 284.5 748.3 289.7C746.6 294.9 745.3 300.6 744.4 305.4C743.5 310.2 743 316.2 742.7 318.4" />
<path class="w2 c" d="M773.5 310.5V336" />
<path class="r c" d="M772.5 255.7V310.5" />
<path class="w c" d="M771.5 336V451" />
<path class="w" d="M742 451Q742 453.800 744.500 453.800H769Q771.800 453.800 771.800 451" />
<path class="w c" d="M745.7 377.5H767.3" />
<path class="w c" d="M776.4 328.5H811" />
<path class="w" d="M811 328.5Q813.6 328.5 813.6 331V451" />
<path class="w" d="M813.600 451Q813.600 453.800 816 453.800H841Q843.700 453.800 843.700 451" />
<path class="w c" d="M817 377.5H838.5" />
<path d="M784 261.500H811.700L813.700 256.300Q814 255.700 815 255.700H816.900L830.700 276.300H839.200L841.400 278.600V315.800Q841.400 318.400 844 318.400H864.600Q866.600 320.500 866.600 324V327.800Q866.600 333 862 337Q858 341 852.900 343.500Q848 346.500 843.700 347.500Q839 348.300 834.600 348.100Q830 347.800 826.700 346.100Q823.500 343.500 821.500 339.600L816.300 331.500L813.600 326V321.300H798Q795.500 321.300 794 319.700Q791.700 318.500 791.700 315.200H803.200L813.700 308L816.900 305L818.200 303.400H833.900V305H841.400V280.500H833.900V284.400H818.200V282.500L813.700 277.900Q811 275.500 808.400 274.200L803.900 270.300H782.500Q781.400 269 781.400 266Q781.400 262.500 784 261.500Z" style="fill:url(#hat);stroke:none"/>
<path class="w" d="M784 261.500H811.700L813.700 256.300Q814 255.700 815 255.700H816.900L830.700 276.300H839.200L841.400 278.600V315.800Q841.400 318.400 844 318.400H864.600" />
<path class="w" d="M864.600 318.400Q866.600 320.500 866.600 324V327.800Q866.600 333 862 337Q858 341 852.900 343.500Q848 346.500 843.700 347.500Q839 348.300 834.600 348.100Q830 347.800 826.700 346.100Q823.500 343.500 821.500 339.600L816.300 331.500L813.600 326V321.300H798Q795.500 321.300 794 319.700Q791.700 318.500 791.700 315.200" />
<path class="w" d="M784 261.5C783.6 261.9 782 262.9 781.6 264C781.2 265.1 781.4 265.7 781.6 268C781.8 270.3 782 275.5 783 278C784 280.5 785.9 281.5 787.5 283C789.1 284.5 791.5 285.6 792.7 287C793.9 288.4 794.5 289.2 794.7 291.6C794.9 294 794.5 298.2 794 301.4C793.5 304.6 791.8 308.2 791.4 310.6C791 313 791.7 314.9 791.7 315.8" />
<path class="w" d="M782.500 270.300H803.900L808.400 274.200Q811 275.500 813.700 277.900L818.200 282.500" opacity=".85"/>
<rect class="c" x="818.5" y="284.5" width="15.5" height="17" style="fill:#000;stroke:#fff;stroke-width:1"/>
<path class="w c" d="M833.9 280.5H841.4" />
<path class="w c" d="M833.9 305.5H841.4" />
<path class="cy c" d="M818.2 282.5H834" />
<path class="cy c" d="M818.2 303.5H834" />
<path class="w" d="M815.6 306.7 L839.8 348.1" />
<path class="w" d="M821.6 305.7 L845 348.1" />
<path class="cy" d="M839.8 348.1 L861 390.5" />
<path class="cy" d="M845 348.1 L866.6 389.3" />
<path class="rd2" d="M824 318 L862.5 388" />
<path class="w2 c" d="M844.5 348V396" />
<path class="w c" d="M843.5 396V451" />
<path class="w" d="M845.700 390.500H881Q882.900 390.500 882.900 388.500V320.500Q882.900 318.400 881 318.400H864.600" />
<path class="w" d="M885.500 321V388" />
<path class="w" d="M882.900 320.500L885.500 321M882.900 388.500L885.500 388" />
<path class="w" d="M885.500 328.400H917.500M885.500 380.400H917.500" />
<path class="w c" d="M917.5 328.4V380.4" />
<path class="w" d="M917.900 328.400L967.200 332.700M917.900 380.400L967.200 375.600" />
<path class="w c" d="M967.5 332.7V375.6" />
<path class="w" d="M925 348.100H959Q962.600 348.100 962.600 351.500V357.500Q962.600 360.800 959 360.800H925Q921.400 360.800 921.400 357.500V351.500Q921.400 348.100 925 348.100Z" />
<path class="w" d="M969.800 334V375M969.800 334Q969.800 332.400 971.500 332.400H988.500Q990.500 332.400 990.500 334.500V374.500Q990.500 376.500 988.500 376.500H971.500Q969.800 376.500 969.800 375" />
<path class="w c" d="M988.5 334V375" />
<path class="cy c" d="M970.5 335.5H988.5" />
<path class="cy c" d="M970.5 373.5H988.5" />
<path class="r c" d="M721.5 318.5V390.5" />
<rect class="rf c" x="721.5" y="319" width="1" height="3"/>
<rect class="rf c" x="721.5" y="387" width="1" height="3"/>
<text class="rt" x="719.5" y="357" font-size="5.5" text-anchor="middle" transform="rotate(-90 719.5 357)" >Ø50h6</text>
<path class="r" d="M712 318.3l-3 -5h6zM712 318.3l6.5 -11" />
<circle class="r" cx="730.2" cy="308.5" r="3.4"  shape-rendering="auto"/>
<text class="rt" x="730.2" y="310.4" font-size="5" text-anchor="middle" >C</text>
<path class="r c" d="M730.5 311.9V315.7" />
<path class="r c" d="M726.7 315.5H733.7" />
<text class="rt" x="729" y="337" font-size="5.5" text-anchor="middle" >61°</text>
<path class="r c" d="M734 332.5H748.5" />
<path class="r" d="M748.500 332l2.500 4.500M748.5 332l-3.500 .8" />
<path class="rd2" d="M770.7 300 L721.7 388.9" />
<path class="r" d="M740 354.2 L731.5 400 L728.9 418.8" />
<path class="r" d="M687 370V393H704.700V442.300H693" />
<path class="r c" d="M711.5 391.3V466.5" />
<path class="r c" d="M695 466.5H711.6" />
<path class="r" shape-rendering="auto" style="stroke-width:1.15" d="M688.8 315L692.9 305.2L697 315M690.2 311.7H695.6"/>
<path class="w c" d="M684.5 306.5V315.7" />
<path class="w c" d="M678 306.5H685" />
<path class="r2 c" d="M671.5 306.5H678.5" />
<path class="r" shape-rendering="auto" style="stroke-width:1.15" d="M687.7 408.8L692 398.5L696.2 408.8M689.1 405.3H694.8"/>
<path class="w c" d="M683.5 399.8V410.3" />
<path class="w c" d="M677 410.5H684" />
<path class="r2 c" d="M670.5 410.5H677.5" />
<rect class="r c" x="651.5" y="439.5" width="42" height="7"/>
<path class="r c" d="M660.5 439.4V446.5" />
<path class="r c" d="M678.5 439.4V446.5" />
<path class="r" d="M653.9 445.6L658.4 441.2M658.4 441.2h-2.200M658.4 441.2v2.200" shape-rendering="auto" style="stroke-width:1.1"/>
<text class="rt" x="669.8" y="445.2" font-size="5" text-anchor="middle" >0.025</text>
<text class="rt" x="686.1" y="445.2" font-size="5" text-anchor="middle" >C-D</text>
<rect class="r c" x="665.5" y="463.5" width="28" height="7"/>
<path class="r c" d="M675.5 463.2V470.4" />
<path class="r" d="M668.1 469.7L670.3 464.9M671.5 469.7L673.7 464.9" shape-rendering="auto"/>
<circle class="r" cx="670.9" cy="467.3" r="1.5"  shape-rendering="auto"/>
<text class="rt" x="684.9" y="469.1" font-size="5" text-anchor="middle" >0.008</text>
<text class="wt" x="673.2" y="460.6" font-size="5" text-anchor="middle" >2</text>
<path class="w" d="M676 456.500L675.500 460.500M676.500 457.500H679L676.500 460.600M677 458.500L680.500 460.600M680 455.800V459.500" shape-rendering="auto" style="stroke-width:.8"/>
<path class="r c" d="M728.9 417.5H832.5" />
<text class="rt" x="781.2" y="415.7" font-size="5.5" text-anchor="middle" >108</text>
<path class="r" d="M842.4 354 L832.6 417.4" />
<rect class="rf c" x="829.5" y="418" width="3" height="1"/>
<path class="r c" d="M741.5 450V470.4" />
<path class="r c" d="M771.5 450V470.4" />
<path class="r c" d="M741.6 468.5H771.6" />
<rect class="rf c" x="742.6" y="468.5" width="3" height="1"/>
<rect class="rf c" x="768.6" y="468.5" width="3" height="1"/>
<text class="rt" x="757" y="467.2" font-size="5.5" text-anchor="middle" >28</text>
<path class="r c" d="M813.5 450V470.4" />
<path class="r c" d="M843.5 450V470.4" />
<path class="r c" d="M813.6 467.5H843.6" />
<rect class="rf c" x="814.6" y="467.5" width="3" height="1"/>
<rect class="rf c" x="840.6" y="467.5" width="3" height="1"/>
<text class="rt" x="828.3" y="466.2" font-size="5.5" text-anchor="middle" >28</text>
<path class="r c" d="M784.5 328.5V487.5" />
<path class="r c" d="M792.5 328.5V506.6" />
<path class="r c" d="M804.5 359.9V502.2" />
<path class="r" d="M804.5 359.9 L827.4 324" />
<rect class="rf c" x="785.1" y="329" width="1" height="3"/>
<rect class="rf c" x="793.2" y="329" width="1" height="3"/>
<path class="r c" d="M767.6 487.5H784.6" />
<rect class="r c" x="726.5" y="484.5" width="41" height="8"/>
<path class="r c" d="M735.5 484.1V491.6" />
<path class="r c" d="M754.5 484.1V491.6" />
<path class="r" d="M728.9 490.8L731.2 486M731.7 490.8L734.1 486" shape-rendering="auto"/>
<text class="rt" x="745.1" y="490.2" font-size="5" text-anchor="middle" >Ø0.01</text>
<text class="rt" x="761.1" y="490.2" font-size="5" text-anchor="middle" >C-D</text>
<path class="r c" d="M777.6 506.5H792.7" />
<rect class="r c" x="748.5" y="503.5" width="29" height="7"/>
<path class="r c" d="M759.5 503.1V510.5" />
<path class="r" d="M751.4 509.7L753.6 504.9M754.8 509.7L757 504.9" shape-rendering="auto"/>
<circle class="r" cx="754.2" cy="507.3" r="1.5"  shape-rendering="auto"/>
<text class="rt" x="768.6" y="509.1" font-size="5" text-anchor="middle" >0.008</text>
<path class="r c" d="M804.4 502.5H820.3" />
<rect class="r c" x="820.5" y="499.5" width="71" height="7"/>
<path class="r c" d="M828.5 499.3V506.6" />
<path class="r c" d="M844.5 499.3V506.6" />
<path class="r c" d="M872.5 499.3V506.6" />
<path class="r c" d="M877.5 499.3V506.6" />
<circle class="r" cx="824.8" cy="503.5" r="2.3"  shape-rendering="auto"/>
<path class="r" d="M821.8 503.5h6M824.8 500.5v6" />
<text class="rt" x="836.9" y="505.3" font-size="5" text-anchor="middle" >Ø0.1</text>
<text class="rt" x="858.7" y="505.3" font-size="5" text-anchor="middle" >C-D</text>
<text class="rt" x="884.5" y="505.3" font-size="5" text-anchor="middle" >M</text>
<text class="wt" x="841" y="492.8" font-size="5" text-anchor="middle" >2- Φ5</text>
<path class="r" d="M800 337.5l-2.4 -4h4.8zM800 337.5l5.2 -8.8" />
<path class="r c" d="M764.2 261.5H785" />
<path class="r c" d="M764.2 328.5H776.4" />
<path class="r c" d="M766.5 261.2V328.4" />
<rect class="rf c" x="766.5" y="261.7" width="1" height="3"/>
<rect class="rf c" x="766.5" y="324.9" width="1" height="3"/>
<text class="rt" x="764.5" y="295" font-size="5.5" text-anchor="middle" transform="rotate(-90 764.5 295)" >Ø89h8</text>
<path class="r c" d="M803.5 270.3V315.2" />
<rect class="rf c" x="803.5" y="270.8" width="1" height="3"/>
<rect class="rf c" x="803.5" y="311.7" width="1" height="3"/>
<text class="rt" x="801.5" y="293" font-size="5.5" text-anchor="middle" transform="rotate(-90 801.5 293)" >52</text>
<path class="rd2 c" d="M764.2 293.5H848.3" />
<path class="rd2 c" d="M764.2 295.5H848.3" />
<path class="r c" d="M841.4 280.5H864.6" />
<path class="r c" d="M841.4 305.5H864.6" />
<path class="r c" d="M863.5 280.5V305" />
<rect class="rf c" x="863.5" y="281" width="1" height="3"/>
<rect class="rf c" x="863.5" y="301.5" width="1" height="3"/>
<text class="rt" x="861.5" y="293" font-size="5.5" text-anchor="middle" transform="rotate(-90 861.5 293)" >Ø18</text>
<path class="rd2" d="M783 278.6 L747 340" />
<path class="r" d="M803.2 295.6 L829.3 323.7" />
<text class="rt" x="831" y="311.5" font-size="5" text-anchor="middle" >R23</text>
<circle class="r" cx="791.4" cy="250.7" r="3.4"  shape-rendering="auto"/>
<text class="rt" x="791.4" y="252.6" font-size="5" text-anchor="middle" >D</text>
<path class="r c" d="M791.5 254.1V258.6" />
<path class="r c" d="M787.9 258.5H794.9" />
<path class="r" d="M803 243l8 4l-4 6M811 247l2.500 -3" />
<text class="rt" x="806.5" y="252" font-size="4.5" text-anchor="middle" transform="rotate(-60 806.5 252)" >8</text>
<path class="r" d="M845.500 261.500l4.500 -3.500v7zM850 263l3.500 3.800" />
<path class="r" d="M867 318.3l-2.5 -4.2h5.1zM867 318.3l5.5 -9.3" />
<circle class="r" cx="871" cy="308.6" r="3.4"  shape-rendering="auto"/>
<text class="rt" x="871" y="310.5" font-size="5" text-anchor="middle" >D</text>
<path class="r c" d="M871.5 312V315.5" />
<path class="r c" d="M867.5 315.5H874.5" />
<path class="r c" d="M896.5 328.5V380.4" />
<rect class="rf c" x="896.5" y="329" width="1" height="3"/>
<rect class="rf c" x="896.5" y="376.9" width="1" height="3"/>
<text class="rt" x="894.5" y="354.5" font-size="5.5" text-anchor="middle" transform="rotate(-90 894.5 354.5)" >Ø70h6</text>
<text class="rt" x="876" y="260" font-size="5" text-anchor="middle" transform="rotate(-90 876 260)" >8</text>
<text class="rt" x="908" y="297.5" font-size="5" text-anchor="middle" transform="rotate(-90 908 297.5)" >16</text>
<path class="r" d="M912 327.8l-2.7 -4.5h5.4zM912 327.8l5.9 -9.9" />
<path class="r" d="M917.5 328.2 L934.5 314.5" />
<path class="r c" d="M931.5 317V365.1" />
<rect class="rf c" x="931.5" y="317.5" width="1" height="3"/>
<rect class="rf c" x="931.5" y="361.6" width="1" height="3"/>
<text class="rt" x="929.5" y="341" font-size="5.5" text-anchor="middle" transform="rotate(-90 929.5 341)" >45</text>
<path class="r" d="M917.5 380.4 L934.5 365.1" />
<text class="rt" x="946" y="317" font-size="5.5" text-anchor="middle" >1:10</text>
<path class="r c" d="M934.5 320.5H958" />
<path class="r" d="M934.5 320.4 L940.4 330.2" />
<path class="r c" d="M947.5 348.1V379.5" />
<text class="rt" x="945.8" y="371" font-size="5" text-anchor="middle" transform="rotate(-90 945.8 371)" >12H9</text>
<path class="r" d="M951.500 360.800V414.800H966.300" />
<rect class="r c" x="966.5" y="412.5" width="27" height="7"/>
<path class="r c" d="M976.5 412.3V419.2" />
<path class="r c" d="M987.5 412.3V419.2" />
<path class="r" d="M969.1 416.2h5M970.1 414.4h3M970.1 418.1h3" />
<text class="rt" x="982.2" y="418.1" font-size="5" text-anchor="middle" >0.2</text>
<text class="rt" x="991" y="418.1" font-size="5" text-anchor="middle" >C</text>
<rect class="r c" x="966.5" y="419.5" width="33" height="7"/>
<path class="r c" d="M976.5 419.2V426.4" />
<path class="r c" d="M993.5 419.2V426.4" />
<path class="r" d="M969 425.7L971.4 420.9M971.9 425.7L974.2 420.9" shape-rendering="auto"/>
<text class="rt" x="985.1" y="425.1" font-size="5" text-anchor="middle" >0.015</text>
<text class="rt" x="997" y="425.1" font-size="5" text-anchor="middle" >G</text>
<path class="r c" d="M993.7 419.5H999.6" />
<circle class="r" cx="933.9" cy="380.8" r="3.7"  shape-rendering="auto"/>
<text class="rt" x="933.9" y="382.8" font-size="5" text-anchor="middle" >G</text>
<path class="w" d="M928 374 L934.5 372" />
<path class="r" d="M956.5 388.6l-2.7 -4.5h5.4zM956.5 388.6l5.9 -9.9" />
<path class="r c" d="M874.5 391.2V463" />
<path class="r c" d="M874.1 463.5H971.2" />
<rect class="r c" x="971.5" y="459.5" width="42" height="7"/>
<path class="r c" d="M980.5 459.3V466.5" />
<path class="r c" d="M999.5 459.3V466.5" />
<path class="r" d="M974.2 465.6L978.7 461.2M978.7 461.2h-2.200M978.7 461.2v2.200" shape-rendering="auto" style="stroke-width:1.1"/>
<text class="rt" x="990.2" y="465.2" font-size="5" text-anchor="middle" >Ø0.04</text>
<text class="rt" x="1006.7" y="465.2" font-size="5" text-anchor="middle" >C-D</text>
<path class="r c" d="M909.5 380.4V441.2" />
<path class="r c" d="M924.5 380.4V441.2" />
<path class="r c" d="M909 441.5H967.3" />
<rect class="r c" x="967.5" y="437.5" width="38" height="7"/>
<path class="r c" d="M976.5 437.3V444.7" />
<path class="r c" d="M990.5 437.3V444.7" />
<path class="r" d="M969.9 443.7L974.4 439.3M974.4 439.3h-2.200M974.4 439.3v2.200" shape-rendering="auto" style="stroke-width:1.1"/>
<text class="rt" x="983.7" y="443.3" font-size="5" text-anchor="middle" >0.03</text>
<text class="rt" x="998.6" y="443.3" font-size="5" text-anchor="middle" >C-D</text>
<path class="r2 c" d="M894.4 380.5H907.5" />
<path class="rd2" d="M865 369 L873 354.6" />
<text class="rt" x="869" y="371" font-size="5.5" text-anchor="middle" >61°</text>
<circle class="r" cx="853.2" cy="419.9" r="3.4"  shape-rendering="auto"/>
<text class="rt" x="853.2" y="421.8" font-size="5" text-anchor="middle" >F</text>
<path class="w c" d="M846.5 416V423" />
<path class="r c" d="M846.3 419.5H849.8" />
<path class="r" d="M990 352.7l-0 -0h0zM990 352.7l0 -0" />
<path class="r c" d="M988.5 332.5H1014" />
<path class="r c" d="M988.5 376.5H1014" />
<path class="r c" d="M1012.5 332.4V376.5" />
<rect class="rf c" x="1012.5" y="332.9" width="1" height="3"/>
<rect class="rf c" x="1012.5" y="373" width="1" height="3"/>
<text class="rt" x="1010.5" y="354.5" font-size="5.5" text-anchor="middle" transform="rotate(-90 1010.5 354.5)" >M42x2-6h</text>
<path class="r" d="M1006 320 L990.5 352.7" />
<path class="r" d="M996.3 340 L1010.7 310.6" />
<path class="r c" d="M1010.7 310.5H1037.5" />
<text class="rt" x="1024" y="309.3" font-size="5" text-anchor="middle" >2-A4/8.5</text>
<text class="rt" x="1024" y="315.8" font-size="5" text-anchor="middle" >GB/T 145</text>
<text class="rt" x="1023" y="297" font-size="5" text-anchor="middle" >5</text>
<path class="r" d="M991.500 298l4.500 -2.800v5.600zM996 300.500l5.500 3.200" />
<path class="r" d="M995.5 386.5l-2.4 -4h4.8zM995.5 386.5l5.2 -8.8" />
<path class="r c" d="M980 419.5H999.6" />
<path class="w" shape-rendering="auto" style="stroke-width:1.15" d="M587.2 530L591.6 520L596 530M588.7 526.6H594.5"/>
<path class="w" shape-rendering="auto" style="stroke-width:1.15" d="M643.9 530L648.3 520L652.8 530M645.4 526.6H651.3"/>
<path class="w c" d="M602.3 523.5H638" />
<path d="M601.700 594.600V610.100H594.700A31 31 0 1 0 594.700 594.600Z" style="fill:url(#hat2);stroke:none" shape-rendering="auto"/>
<path class="w" d="M594.700 610.100A31 31 0 1 0 594.700 594.600" shape-rendering="auto" style="stroke-width:1.15"/>
<path class="w c" d="M594 594.5H601.7" />
<path class="w c" d="M601.5 594.6V610.1" />
<path class="r c" d="M562.8 594.5H595" />
<path class="r c" d="M562.8 610.5H601.7" />
<path class="r c" d="M564.5 594.6V610.1" />
<rect class="rf c" x="564.5" y="595.1" width="1" height="3"/>
<rect class="rf c" x="564.5" y="606.6" width="1" height="3"/>
<text class="rt" x="562.5" y="602.5" font-size="4.5" text-anchor="middle" transform="rotate(-90 562.5 602.5)" >12H9</text>
<path class="rd2 c" d="M568.3 602.5H666" />
<path class="rd2 c" d="M624.5 563.9V640.6" />
<path class="r c" d="M624.6 571.5H687.2" />
<path class="r c" d="M624.6 633.5H687.2" />
<path class="r c" d="M684.5 571.2V633.4" />
<rect class="rf c" x="684.5" y="571.7" width="1" height="3"/>
<rect class="rf c" x="684.5" y="629.9" width="1" height="3"/>
<text class="rt" x="682.5" y="602.3" font-size="5.5" text-anchor="middle" transform="rotate(-90 682.5 602.3)" >Ø50h6</text>
<path class="r c" d="M601.5 610.1V659.4" />
<path class="r c" d="M655.5 602.3V659.4" />
<path class="r c" d="M601.7 657.5H655.4" />
<rect class="rf c" x="602.7" y="657.5" width="3" height="1"/>
<rect class="rf c" x="652.4" y="657.5" width="3" height="1"/>
<text class="rt" x="628.4" y="656.2" font-size="5.5" text-anchor="middle" >39.5</text>
<rect class="r c" x="600.5" y="537.5" width="30" height="6"/>
<path class="r c" d="M607.5 537.9V543.9" />
<path class="r c" d="M624.5 537.9V543.9" />
<path class="r" d="M601.8 541.4h5M602.8 539.6h3M602.8 543.2h3" />
<text class="rt" x="616.3" y="543.2" font-size="4.5" text-anchor="middle" >0.16</text>
<text class="rt" x="627.8" y="543.2" font-size="4.5" text-anchor="middle" >H</text>
<rect class="r c" x="600.5" y="543.5" width="33" height="7"/>
<path class="r c" d="M607.5 543.9V551" />
<path class="r c" d="M626.5 543.9V551" />
<path class="r" d="M601.7 550.4L604.1 545.6M604.5 550.4L606.9 545.6" shape-rendering="auto"/>
<text class="rt" x="617" y="549.8" font-size="4.5" text-anchor="middle" >0.012</text>
<text class="rt" x="630" y="549.8" font-size="4.5" text-anchor="middle" >H</text>
<rect class="r c" x="600.5" y="552.5" width="54" height="7"/>
<path class="r c" d="M610.5 552.3V559" />
<path class="r c" d="M622.5 552.3V559" />
<path class="r c" d="M641.5 552.3V559" />
<path class="r c" d="M647.5 552.3V559" />
<path class="r" d="M602.8 558.4h5.600M605.5 558.4v-4.800" />
<text class="rt" x="616.3" y="557.9" font-size="4.5" text-anchor="middle" >0.1</text>
<text class="rt" x="631.8" y="557.9" font-size="4.5" text-anchor="middle" >C-D</text>
<path class="r" d="M600.100 541H577.200V594.600" />
<rect class="rf c" x="577.7" y="591.1" width="1" height="3"/>
<text class="rt" x="652.5" y="541.5" font-size="5" text-anchor="middle" >16</text>
<text class="rt" x="586" y="580" font-size="5" text-anchor="middle" >19</text>
<text class="rt" x="568.8" y="637" font-size="5" text-anchor="middle" transform="rotate(-90 568.8 637)" >83</text>
<path class="r" d="M653 571l-2.4 -4h4.8zM653 571l5.2 -8.8" />
<path class="r" d="M586 610l-2.4 -4h4.8zM586 610l5.2 -8.8" />
<path class="r" d="M590.600 628.300l8 6.500M596 638l4.500 -3.500l-4.500 -3.500z" />
<path class="r" shape-rendering="auto" style="stroke-width:1.15" d="M567.5 604.5L571.8 595.5L576 604.5M568.9 601.4H574.6"/>
<circle class="r" cx="672.3" cy="644.6" r="3.8" shape-rendering="auto"/>
<text class="rt" x="672.3" y="646.6" font-size="5" text-anchor="middle" >H</text>
<path class="r c" d="M672.5 637.2V640.8" />
<path class="r c" d="M669 637.5H675.7" />
</g></svg>
<!-- dropdown menu -->
<div style="left:236px;top:52px;width:239px;height:427px;background:linear-gradient(90deg,rgba(0,0,0,0) 0,rgba(0,0,0,0) 232px,rgba(0,0,0,.35) 235px,rgba(0,0,0,.1) 239px);"></div>
<div style="left:238px;top:472px;width:236px;height:6px;background:linear-gradient(180deg,rgba(0,0,0,.4),rgba(0,0,0,.05))"></div>
<div id="menu" style="left:235px;top:50px;width:236px;height:425px;background:#f2f2f2;border:1px solid #cdcdcd"></div>
<div style="left:268px;top:78.3px;width:200px;height:1px;background:#d6d6d6"></div>
<div style="left:268px;top:128.8px;width:200px;height:1px;background:#d6d6d6"></div>
<div style="left:268px;top:248.5px;width:200px;height:1px;background:#d6d6d6"></div>
<div style="left:268px;top:343.8px;width:200px;height:1px;background:#d6d6d6"></div>
<div style="left:268px;top:395.0px;width:200px;height:1px;background:#d6d6d6"></div>
<div style="left:268px;top:423.8px;width:200px;height:1px;background:#d6d6d6"></div>
<svg id="menuicons" width="1392" height="765" viewBox="0 0 1392 765">
<defs>
<radialGradient id="gstar"><stop offset="0" stop-color="#fffbe0"/><stop offset=".45" stop-color="#ffd84a"/><stop offset="1" stop-color="#f2a21c"/></radialGradient>
<linearGradient id="gblk" x1="0" y1="0" x2="0" y2="1"><stop offset="0" stop-color="#9ee4ff"/><stop offset="1" stop-color="#35b4ee"/></linearGradient>
</defs>
<!-- super dimension -->
<path d="M243.500 60.300V69.600M258.500 60.300V69.600M244 64H258M246.300 62L244.200 64L246.300 66M255.700 62L257.800 64L255.700 66" stroke="#0a7484" stroke-width="1.100" fill="none"/>
<path d="M251 57.800l1.300 2.700l2.900-1l-.9 2.900l2.700 1.300l-2.700 1.300l.9 2.900l-2.900-1l-1.300 2.700l-1.300-2.700l-2.900 1l.9-2.900l-2.700-1.300l2.700-1.300l-.9-2.900l2.900 1z" fill="url(#gstar)"/>
<!-- quick dimension -->
<path d="M244.500 86V95.300M247.500 86V95M255.300 86V95M258.200 86V95.300M244.500 88.800H258.200" stroke="#0a7c80" stroke-width="1.100" fill="none"/>
<path d="M244.300 99.700V96.600H247.800V95.200H254.300V96.600H258V99.700Z" fill="url(#gblk)" stroke="#149cd8" stroke-width=".9"/>
<!-- dimension merge -->
<path d="M244.500 108V117.300M258.200 108V117.300M244.500 110.600H258.200" stroke="#0a7c80" stroke-width="1.100" fill="none"/>
<path d="M249.600 108V115.800" stroke="#5cc0f0" stroke-width="1"/>
<path d="M247.300 111l4.600 4.600M251.900 111l-4.600 4.600" stroke="#f01818" stroke-width="1.100"/>
<path d="M244.300 121.700V118.600H249V117.400H258V121.700Z" fill="url(#gblk)" stroke="#149cd8" stroke-width=".9"/>
<!-- aligned -->
<path d="M244.300 142.200V150.300H253Z" fill="#3cbcf2" stroke="#149cd8" stroke-width=".8"/>
<path d="M244.300 142L250.800 136M253 150.300L258.800 144.300M250 137.800L257.200 145M250 140V137.800H252.300M257.200 142.700V145H255" stroke="#0a7c80" stroke-width="1.050" fill="none"/>
<!-- linear -->
<path d="M244.800 159.300V166.800M257.500 159.300V166.800M244.800 161.700H257.500M246.800 160.200L245.200 161.700L246.800 163.200M255.500 160.200L257.100 161.700L255.500 163.200" stroke="#0a7c80" stroke-width="1.100" fill="none"/>
<rect x="244.700" y="168.600" width="12.800" height="4.100" fill="url(#gblk)" stroke="#149cd8" stroke-width=".9"/>
<!-- angular -->
<path d="M244.300 188.600H258.800L251.500 194.800Z" fill="#3cbcf2" stroke="#149cd8" stroke-width=".7"/>
<path d="M244.300 182.900L251.500 190.300L258.800 182.900M246.800 183.500Q251.500 179.500 256.200 183.500M246.600 181.500V183.700H248.800M256.400 181.500V183.700H254.200" stroke="#0a7c80" stroke-width="1.050" fill="none"/>
<!-- radius -->
<circle cx="250.200" cy="209.700" r="6.200" fill="#f4f4f4" stroke="#111" stroke-width="1.300"/>
<path d="M243.300 217.300H258.800" stroke="#111" stroke-width="1.100"/>
<path d="M252.500 207.300L247.800 212.300M247.600 209.800V212.500H250.300" stroke="#a80000" stroke-width="1.200" fill="none"/>
<!-- diametric -->
<circle cx="249.700" cy="234.500" r="7" fill="#aeeeee" stroke="#2a9a9a" stroke-width="1.300"/>
<path d="M243.200 234.500H256.200M245.200 232.800L243.400 234.500L245.200 236.200M254.200 232.800L256 234.500L254.200 236.200" stroke="#006a7a" stroke-width="1.050" fill="none"/>
<!-- leader -->
<rect x="244.500" y="263.600" width="4.300" height="6" fill="#5cc4f6" stroke="#0a90c8" stroke-width=".9"/>
<path d="M258.500 257.300H254.100L249.300 262.400M249.300 259.600V262.400H252.100" stroke="#0a7484" stroke-width="1.100" fill="none"/>
<!-- mleader -->
<rect x="244.500" y="285.600" width="4.100" height="4.100" fill="#5cc4f6" stroke="#0a90c8" stroke-width=".9"/>
<rect x="250.600" y="289.300" width="4.100" height="4.100" fill="#5cc4f6" stroke="#0a90c8" stroke-width=".9"/>
<path d="M258.500 279.300H254.100L247.500 286.400M253.500 280.400L252.700 289.100" stroke="#0a7484" stroke-width="1.100" fill="none"/>
<!-- dim arc length -->
<g stroke="#5aaed0" stroke-width="1" fill="none" opacity=".9">
<path d="M246.300 302L250.700 305.800M249.800 301L247 306.500M254.300 309L258.300 312.300M257.600 308L255 313.300M248.500 304Q254.500 304.500 256.300 310.500M245.800 308Q247 305.500 248.500 304M250.800 313.400Q254 312.800 256.300 310.500"/>
<circle cx="245.600" cy="308.300" r="1.100" stroke="#4a88b0"/><circle cx="250.500" cy="313.700" r="1.100" stroke="#4a88b0"/>
</g>
<path d="M254.400 304L256.500 305.300" stroke="#e01010" stroke-width="1.300"/>
<!-- circle center mark -->
<circle cx="251" cy="329.800" r="7.500" fill="#b6f2fa" stroke="#4a94b4" stroke-width="1"/>
<path d="M247.600 329.800H254.400M251 326.400V333.200" stroke="#c00000" stroke-width="1.300"/>
<!-- ordinate dim -->
<g stroke="#3a9ac0" stroke-width="1" fill="none">
<circle cx="245.500" cy="360" r="1.300"/><path d="M246.800 359.900L253 359.500L254.100 358.300H258.400"/>
<path d="M254.500 355.500V357M256 355.500V357M257.500 355.500V357" stroke-width=".8"/>
<!-- ordinateXY dim -->
<circle cx="246.400" cy="384.900" r="1.300"/><path d="M246.500 374.200V383.500M247.800 384.500H258.700"/>
<path d="M248 375.500H250M248 377.500H249.500M248 379.500H250M255 381.500V383M256.500 381.500V383M258 381.500V383" stroke-width=".8"/>
</g>
<!-- dimension alignment -->
<path d="M243.500 403.500H258M243.500 403.500V408M250.300 402V408M258 403.500V408" stroke="#0a8a1a" stroke-width="1" stroke-dasharray="1.200 1" fill="none"/>
<path d="M243 409.500H258.300M243.500 407.300V412M250.300 407.300V412M258 407.300V412" stroke="#f01010" stroke-width="1.100" fill="none"/>
<rect x="243.300" y="413.600" width="14.800" height="2.600" fill="#8adcff" stroke="#2aace6" stroke-width=".7"/>
<!-- geometric tolerance -->
<rect x="247.500" y="432.500" width="11.500" height="6.200" fill="#f6f6f6" stroke="#0a6a7a" stroke-width="1.200"/>
<path d="M252.500 432.500V438.700M249 435.700H251M247.500 435.800H245.200V441.700M242.700 442.100H248.300" stroke="#0a6a7a" stroke-width="1" fill="none"/>
<path d="M243 445.200H259.300" stroke="#0a7c8c" stroke-width="1.500"/>
<!-- edit geometric tolerance -->
<rect x="244.600" y="460.500" width="11" height="5.700" fill="#f6f6f6" stroke="#0a6a7a" stroke-width="1.200"/>
<path d="M250 460.500V466.200M246.300 463.500H248.300M254 460.500V457" stroke="#0a6a7a" stroke-width="1" fill="none"/>
<path d="M257 454.600H253.600V458.800H257M253.600 456.700H256.400" stroke="#1616f0" stroke-width="1.200" fill="none"/>
</svg>

<!-- tab strip -->
<div style="left:8px;top:713px;width:1374px;height:23px;background:#f0f0f0;border-top:1px solid #fff"></div>
<div style="left:10px;top:714px;width:1372px;height:1px;background:#000"></div>
<div style="left:10px;top:715px;width:21px;height:21px;background:#f0f0f0;border-left:1px solid #fff;border-right:1px solid #696969;border-bottom:1px solid #696969;box-shadow:inset -1px -1px 0 #a0a0a0"></div>
<div style="left:32px;top:715px;width:23px;height:21px;background:#f0f0f0;border-left:1px solid #fff;border-right:1px solid #696969;border-bottom:1px solid #696969;box-shadow:inset -1px -1px 0 #a0a0a0"></div>
<svg width="1392" height="765" viewBox="0 0 1392 765">
 <path d="M17.5 725.5l4-4v8z" fill="#000"/>
 <path d="M44.500 725.500l-4-4v8z" fill="#000"/>
 <!-- model tab -->
 <path d="M55.500 714L66 736H117.500L128 714z" fill="#fff"/>
 <path d="M55.500 714L66 736" stroke="#000" stroke-width="1.2" fill="none"/>
 <path d="M128 714.500L117.200 736" stroke="#000" stroke-width="1.2" fill="none"/>
 <path d="M120.500 724.500L126 736" stroke="#000" stroke-width="1.2" fill="none"/>
 <path d="M127.500 714.500H198L187 736" stroke="#000" stroke-width="1.200" fill="none"/>
 <text x="69.200" y="730.700" font-family="Liberation Sans" font-weight="700" font-size="13.500" textLength="43" lengthAdjust="spacingAndGlyphs" fill="#000">Model</text>
</svg>
<!-- status bar -->
<div style="left:8px;top:736px;width:1376px;height:21px;background:#f0f0f0;border-top:0"></div>
<div style="left:8px;top:737px;width:1376px;height:2px;background:#fff"></div>
<div style="left:497px;top:756px;width:887px;height:1px;background:#fff"></div>
<div style="left:497px;top:740px;width:136px;height:18px;border-left:1px solid #a0a0a0;border-top:1px solid #a0a0a0;border-right:1px solid #fff"></div>
<div style="left:636px;top:740px;width:414px;height:18px;border-left:1px solid #a0a0a0;border-top:1px solid #a0a0a0;border-right:1px solid #fff"></div>
<div style="left:1051px;top:740px;width:288px;height:18px;border-left:1px solid #a0a0a0;border-top:1px solid #a0a0a0;border-right:1px solid #fff"></div>
<div style="left:1341px;top:740px;width:42px;height:18px;border-left:1px solid #a0a0a0;border-top:1px solid #a0a0a0"></div>
<div style="left:7px;top:757px;width:1378px;height:1px;background:#6e6e6e"></div>
<!-- clipped text of window underneath (only a slice of the glyphs is visible) -->
<svg width="1392" height="765" viewBox="0 0 1392 765"><defs><clipPath id="cb"><rect x="0" y="758" width="1392" height="7"/></clipPath></defs><g clip-path="url(#cb)">
<g stroke="#2e2e2e" stroke-width="1.150" fill="none" opacity=".9">
<path d="M138 757V766M138 761H142.3M143.3 757V766M143.3 759.500H147.6M147.6 759.500V766M143.3 763H147.6"/>
<path d="M150.2 759H160.79999999999998M155.5 759L150.2 766M155.5 759L160.79999999999998 766M152.2 763H158.79999999999998"/>
<path d="M163.39999999999998 758.500H173.99999999999997M165.39999999999998 758.500V765.500M171.99999999999997 758.500V766M163.39999999999998 762.500H173.99999999999997"/>
<path d="M176.59999999999997 758H187.19999999999996V766M176.59999999999997 758V766M178.59999999999997 761H185.19999999999996M178.59999999999997 764H185.19999999999996M181.89999999999998 758V766"/>
<path d="M191.79999999999995 760v1.300M191.79999999999995 764v1.300" stroke-width="1.400"/>
<path d="M202.99999999999994 760.500H213.59999999999994M208.29999999999995 757V766M203.99999999999994 763.500H212.59999999999994M204.99999999999994 757V765"/>
<path d="M214.49999999999994 760.500H225.09999999999994M219.79999999999995 757V766M215.49999999999994 763.500H224.09999999999994M216.49999999999994 757V765"/>
<path d="M313.5 757L311.5 762M313.0 760V766M316.8 758H322.1M319.3 757V766M316.8 762H322.1"/>
<path d="M353.5 760.500H363.8M358.65 757V766M354.5 763.500H362.8M355.5 757V765"/>
<path d="M367.3 757V766M367.3 761H371.45000000000005M372.45000000000005 757V766M372.45000000000005 759.500H376.6M376.6 759.500V766M372.45000000000005 763H376.6"/>
<path d="M381 757L379 762M380.5 760V766M384.15 758H389.3M386.65 757V766M384.15 762H389.3"/>
<path d="M487.5 760.500H498.1M492.8 757V766M488.5 763.500H497.1M489.5 757V765"/>
<path d="M502.3 757L500.3 762M501.8 760V766M505.6 758H510.90000000000003M508.1 757V766M505.6 762H510.90000000000003"/>
<path d="M515 764.500l-1 2" stroke-width="1.400"/>
<path d="M525 759H536.2M530.6 759L525 766M530.6 759L536.2 766M527 763H534.2"/>
<path d="M538.5 760.500H549.7M544.1 757V766M539.5 763.500H548.7M540.5 757V765"/>
<path d="M552.0 760.500H563.2M557.6 757V766M553.0 763.500H562.2M554.0 757V765"/>
<path d="M565.5 758.500H576.7M567.5 758.500V765.500M574.7 758.500V766M565.5 762.500H576.7"/>
<path d="M579.0 758.500H590.2M581.0 758.500V765.500M588.2 758.500V766M579.0 762.500H590.2"/>
<path d="M592.5 760.500H603.7M598.1 757V766M593.5 763.500H602.7M594.5 757V765"/>
<path d="M606.0 759H617.2M611.6 759L606.0 766M611.6 759L617.2 766M608.0 763H615.2"/>
<path d="M619.5 760.500H630.7M625.1 757V766M620.5 763.500H629.7M621.5 757V765"/>
<path d="M641 757Q637.5 762 641 768"/>
<path d="M646 757L644 762M645.5 760V766M647.25 758H650.5M649.75 757V766M647.25 762H650.5"/>
<path d="M675 763.500l2 2" stroke-width="1.300"/>
<path d="M715 763.500l2 2" stroke-width="1.300"/>
<path d="M752.5 760.500H763.0M757.75 757V766M753.5 763.500H762.0M754.5 757V765"/>
<path d="M766 757Q769.5 762 766 768"/>
</g>
<g font-family="Liberation Sans" font-size="13" fill="#2e2e2e" opacity=".92">
<text x="224.4" y="767" textLength="55.6" lengthAdjust="spacingAndGlyphs">AutoCAD</text>
<text x="284.7" y="767" textLength="25.5" lengthAdjust="spacingAndGlyphs">R2.5</text>
<text x="322.9" y="767" textLength="29.8" lengthAdjust="spacingAndGlyphs">2025</text>
<text x="389.8" y="767" textLength="96.4" lengthAdjust="spacingAndGlyphs">DWG/DXF/DWF</text>
<text x="651.0" y="767" textLength="21.5" lengthAdjust="spacingAndGlyphs">JPG</text>
<text x="684.1" y="767" textLength="28.4" lengthAdjust="spacingAndGlyphs">PNG</text>
<text x="724.3" y="767" textLength="27.2" lengthAdjust="spacingAndGlyphs">BMP</text>
</g>
</g></svg>

<div id="texts">
<span class="t" style="left:36.5px;top:9.4px;font-size:12px;font-weight:400;color:#000;transform:scaleX(1.0872);">version1.dwg AutoDWG DWGSee Pro 2025(d:\autodwg\dwgsee pro 2025)--Single user license</span>
<span class="t" style="left:15.2px;top:34.8px;font-size:12px;font-weight:400;color:#000;transform:scaleX(1.0050);"><u>F</u>ile</span>
<span class="t" style="left:47.4px;top:34.8px;font-size:12px;font-weight:400;color:#000;transform:scaleX(1.0908);"><u>V</u>iew</span>
<span class="t" style="left:88.8px;top:34.8px;font-size:12px;font-weight:400;color:#000;transform:scaleX(1.1605);"><u>M</u>arkup</span>
<span class="t" style="left:149.0px;top:34.8px;font-size:12px;font-weight:400;color:#000;transform:scaleX(1.0972);">Draw</span>
<span class="t" style="left:192.7px;top:34.8px;font-size:12px;font-weight:400;color:#000;transform:scaleX(1.1493);">Editor</span>
<span class="t" style="left:242.5px;top:34.8px;font-size:12px;font-weight:400;color:#000;transform:scaleX(1.0747);">Dimension</span>
<span class="t" style="left:316.9px;top:34.8px;font-size:12px;font-weight:400;color:#000;transform:scaleX(1.1544);">Tools</span>
<span class="t" style="left:362.3px;top:34.8px;font-size:12px;font-weight:400;color:#000;transform:scaleX(1.1398);"><u>O</u>ptions</span>
<span class="t" style="left:422.3px;top:34.8px;font-size:12px;font-weight:400;color:#000;transform:scaleX(1.1317);"><u>H</u>elp</span>
<span class="t" style="left:271.5px;top:57.8px;font-size:12px;font-weight:400;color:#000;transform:scaleX(1.0986);">Super dimension</span>
<span class="t" style="left:271.5px;top:85.8px;font-size:12px;font-weight:400;color:#000;transform:scaleX(1.1051);">Quick dimension</span>
<span class="t" style="left:271.5px;top:108.8px;font-size:12px;font-weight:400;color:#000;transform:scaleX(1.1041);">Dimension merge</span>
<span class="t" style="left:271.5px;top:137.8px;font-size:12px;font-weight:400;color:#000;transform:scaleX(1.1126);">Aligned</span>
<span class="t" style="left:271.5px;top:159.8px;font-size:12px;font-weight:400;color:#000;transform:scaleX(1.0834);">Linear</span>
<span class="t" style="left:271.5px;top:181.8px;font-size:12px;font-weight:400;color:#000;transform:scaleX(1.1103);">Angular</span>
<span class="t" style="left:271.5px;top:203.8px;font-size:12px;font-weight:400;color:#000;transform:scaleX(1.0718);">Radius</span>
<span class="t" style="left:271.5px;top:227.8px;font-size:12px;font-weight:400;color:#000;transform:scaleX(1.1099);">Diametric</span>
<span class="t" style="left:271.5px;top:257.8px;font-size:12px;font-weight:400;color:#000;transform:scaleX(1.1034);">Leader</span>
<span class="t" style="left:271.5px;top:279.3px;font-size:12px;font-weight:400;color:#000;transform:scaleX(1.1518);">Mleader</span>
<span class="t" style="left:271.5px;top:301.3px;font-size:12px;font-weight:400;color:#000;transform:scaleX(1.1094);">Dim arc length</span>
<span class="t" style="left:271.5px;top:323.2px;font-size:12px;font-weight:400;color:#000;transform:scaleX(1.1035);">Circle center mark</span>
<span class="t" style="left:271.5px;top:352.8px;font-size:12px;font-weight:400;color:#000;transform:scaleX(1.1315);">Ordinate dim</span>
<span class="t" style="left:271.5px;top:374.8px;font-size:12px;font-weight:400;color:#000;transform:scaleX(1.0951);">OrdinateXY dim</span>
<span class="t" style="left:271.5px;top:403.8px;font-size:12px;font-weight:400;color:#000;transform:scaleX(1.0971);">Dimension alignment</span>
<span class="t" style="left:271.5px;top:432.8px;font-size:12px;font-weight:400;color:#000;transform:scaleX(1.1017);">Geometric tolerance</span>
<span class="t" style="left:271.5px;top:454.8px;font-size:12px;font-weight:400;color:#000;transform:scaleX(1.0945);">Edit Geometric tolerance</span>
<span class="t" style="left:132.5px;top:720.5px;font-size:12px;font-weight:400;color:#000;transform:scaleX(1.1611);">layout1</span>
<span class="t" style="left:637.9px;top:743.1px;font-size:12px;font-weight:400;color:#000;transform:scaleX(1.0796);">From:</span>
<span class="t" style="left:718.0px;top:743.1px;font-size:12px;font-weight:400;color:#000;transform:scaleX(1.3295);">to:</span>
<span class="t" style="left:1054.1px;top:743.1px;font-size:12px;font-weight:400;color:#000;transform:scaleX(1.0753);">Length :</span>
<span class="t" style="left:1345.3px;top:743.1px;font-size:12px;font-weight:400;color:#000;transform:scaleX(1.0506);">Ang</span>
<span class="t" style="left:552.1px;top:62.8px;font-size:13px;font-weight:400;color:#000;transform:scaleX(1.0000);-webkit-text-stroke:0">b</span>
</div>
<svg id="wm" width="1392" height="765" viewBox="0 0 1392 765">
<defs><filter id="wsh" x="-5%" y="-20%" width="110%" height="150%"><feDropShadow dx="1.2" dy="1.600" stdDeviation="1.300" flood-color="#000" flood-opacity=".38"/></filter>
<g id="liu" fill="none" stroke="#fff" stroke-width="3.100" stroke-linecap="butt">
 <path d="M1.500 2.500L6 5.500M0.500 9.500L5 12.500M1 23.500L6.500 14.500"/>
 <path d="M9 1.800L14.500 0.500M10.200 2V8.500L15.500 7.500M14.800 3.500L13.500 9.500" stroke-width="2.600"/>
 <path d="M18 1.500H25V7.500L23 9.500M21.500 1.500Q21.500 7 17.500 10" stroke-width="2.600"/>
 <path d="M10 13H24.500V23.500H10ZM17.200 13V23.500M10 18.200H24.500" stroke-width="2.700"/>
</g>
</defs>
<g filter="url(#wsh)" opacity=".93">
 <text x="1264.500" y="761" font-family="Liberation Sans" font-weight="700" font-size="32.500" fill="#fff" textLength="38" lengthAdjust="spacingAndGlyphs">3D</text>
 <use href="#liu" x="1305" y="738"/>
 <use href="#liu" x="1333" y="738"/>
 <g fill="none" stroke="#fff" stroke-width="3.100" transform="translate(1361.500 738)">
  <path d="M1.500 24V1.500H24.500V21.500L21.500 24"/>
  <path d="M5.500 7L11.500 19M11.500 7L5 20.500M14 7L20.500 19.500M20.500 7L14 20.500" stroke-width="2.500"/>
 </g>
</g>
</svg>

</body></html>
